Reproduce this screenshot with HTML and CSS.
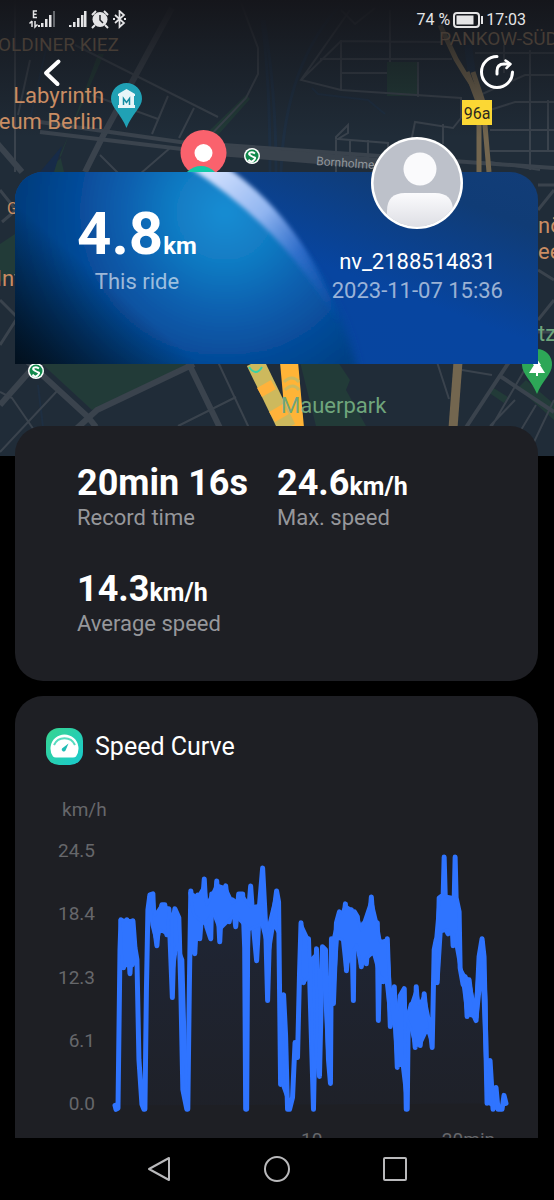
FILE: index.html
```html
<!DOCTYPE html>
<html lang="en">
<head>
<meta charset="utf-8">
<meta name="viewport" content="width=device-width, initial-scale=1">
<title>Ride details</title>
<link rel="stylesheet" href="styles.css">
</head>
<body>
<div class="screen">
  <svg class="map" viewBox="0 0 554 456" preserveAspectRatio="xMidYMin slice" role="img" aria-label="Ride map">
    <defs>
      <linearGradient id="shade" x1="0" y1="0" x2="0" y2="1">
        <stop offset="0" stop-color="#15161b"/>
        <stop offset=".3" stop-color="#15161b" stop-opacity=".6"/>
        <stop offset=".8" stop-color="#15161b" stop-opacity="0"/>
      </linearGradient>
    </defs>
    <rect width="554" height="456" fill="#202c38"/>
    <g fill="#223b38">
      <path d="M387 62h31v34h-31z"/>
      <path d="M44 172l16-13 38-105h6L60 155l4 17z"/>
      <path d="M208 132l38-37 4 4-32 36z"/>
      <path d="M0 244l18-12v40l-18 10z"/>
      <path d="M40 362h152l-100 48z"/>
      <path d="M300 362h38l12 18-4 10 20 36h-50z"/>
      <path d="M488 392l4-5 16 10-4 6zM518 388l8-8 28 24v16z"/>
    </g>
    <path d="M40 172l22-26-8 26z" fill="#172b48"/>
    <g fill="none" stroke="#1e2f42" stroke-width="3">
      <path d="M345 0Q285 60 281 172M262 20Q270 80 270 172M264 20Q276 90 276 172" />
      <path d="M30 120L48 40M312 88l6 6 50 6 17 14" stroke-width="2"/>
      <path d="M468 45l4 30" stroke-width="8"/>
      <path d="M38 385l5 42" stroke-width="2"/>
    </g>
    <g fill="none" stroke="#3a434d">
      <path d="M15 0v172M240 0l18 48v26l-12 24-40 42M75 45L218 117M168 96l-16 38M194 108l-15 30M92 95l66 24M30 60L18 115M100 155l20 20M170 148l-30 26" stroke-width="2"/>
      <path d="M172 8L104 134 85 172M-4 142l26 30" stroke-width="6"/>
      <path d="M40 122l140 20 374 26M40 132l150 18" stroke-width="4"/>
      <path d="M225 151l160 13" stroke-width="11"/>
      <path d="M350 10L301 80l40 10 120 8v20l-8 10-38-6-4 20M341 40v50M301 80l40-39 100 1M320 59h132M340 73h47M390 10v52M418 62v35M341 10l14 14 20-16M336 172v-35l12-12v8l-10 6 50 4v28M350 140v24M368 140v24M443 124v20" stroke-width="2"/>
      <path d="M480 95l45-20h29M490 110l25-8h39M530 50v120M490 130h64M490 151h64M490 162l50 8M548 100v50M475 53h79M504 45v28" stroke-width="2"/>
      <path d="M0 405L38 362M28 362l60 55 8 10M75 430l22-20 97-46M188 362l32 66" stroke-width="6"/>
      <path d="M178 426l58-29M218 362l31 66M0 392l12 6 22 32M58 390L0 452M437 362l12 37M462 370l30 5M528 364l-36 62M515 400l-25 26M554 400l-20 42M536 405l-18 30" stroke-width="2"/>
      <path d="M509 362l-46 70M500 376l54 36" stroke-width="4"/>
      <path d="M0 300l20 20M0 190l16 20-14 12M538 185h16M538 210l16-20M0 345l16-25M538 270l16 10M554 300l-16 20M538 332h16" stroke-width="3"/>
    </g>
    <g fill="none" stroke="#73664f">
      <path d="M440 25l16 34 9 15 14 21" stroke-width="5"/>
      <path d="M467 72l12 32v68M473 72l10 30 6 70" stroke-width="5"/>
      <path d="M458 362l-5 66" stroke-width="9"/>
    </g>
    <g fill="none">
      <path d="M289 362l6 66" stroke="#ffb437" stroke-width="18"/>
      <path d="M255 362l32 66" stroke="#cdb95d" stroke-width="18"/>
      <path d="M264 384l5 9M276 408l6 10" stroke="#ffb23b" stroke-width="16"/>
      <path d="M284 382q8-8 15 0M285 390q8-8 14 0" stroke="#cdb95d" stroke-width="3"/>
      <path d="M249 367q7 10 13 0" stroke="#38d3a7" stroke-width="2"/>
    </g>
    <rect width="554" height="172" fill="url(#shade)"/>
    <g>
      <text class="district" x="119" y="51" text-anchor="end">OLDINER KIEZ</text>
      <text class="district" x="439" y="45">PANKOW-SÜD</text>
      <text class="place" x="104" y="103" text-anchor="end">Labyrinth</text>
      <text class="place" x="103" y="129" text-anchor="end">eum Berlin</text>
      <text class="street" x="316" y="165" transform="rotate(4 316 165)">Bornholme</text>
      <text class="place small" x="7" y="214">G</text>
      <text class="place" x="-4" y="286">Int</text>
      <text class="place" x="538" y="233">nö</text>
      <text class="place" x="538" y="259">ee</text>
      <text class="park" x="538" y="341">tz</text>
      <text class="park" x="281" y="413">Mauerpark</text>
    </g>
    <path d="M126.500 83a15.500 15.500 0 0 1 15.500 16c0 8-10 15-15.500 29-5.500-14-15.500-21-15.500-29a15.500 15.500 0 0 1 15.500-16z" fill="#20a1b5"/>
    <path d="M118 96v-2l8.500-5 8.500 5v2zM119 96h15v9h1v3h-17v-3h1z" fill="#e8f6f8"/>
    <path d="M123.500 105v-6.500l3 4 3-4v6.500" fill="none" stroke="#168ea3" stroke-width="1.500"/>
    <rect x="462" y="100" width="30" height="25" fill="#fbd734"/>
    <text class="shield" x="477" y="119" text-anchor="middle">96a</text>
    <circle cx="203.500" cy="153" r="23" fill="#fa626d"/>
    <circle cx="203.500" cy="153" r="9" fill="#fff"/>
    <circle cx="201" cy="185" r="19" fill="#12c9a7"/>
    <g id="sbahn">
      <circle cx="252" cy="156" r="8" fill="#fff"/>
      <circle cx="252" cy="156" r="6.500" fill="#128a4d"/>
      <path d="M255 153.500q-3-2-5-.8t.5 2.800 4 2-1 3-5-.8" fill="none" stroke="#fff" stroke-width="2"/>
    </g>
    <use href="#sbahn" x="-216" y="215"/>
    <path d="M537 349a15 15 0 0 1 15 16c0 9-10 16-15 29-5-13-15-20-15-29a15 15 0 0 1 15-16z" fill="#2da757"/>
    <path d="M537 359l4 6h-1l5 8h-7v3h-2v-3h-7l5-8h-1z" fill="#fff"/>
  </svg>

  <header class="status">
    <div class="status-group">
      <svg width="98" height="20" viewBox="0 0 98 20" role="img" aria-label="Mobile signal, alarm, Bluetooth">
        <path d="M9 1H5.500v6.500H9M5.500 4.200h3M4 11v6M1.500 13.500l2.500-2.500M7 11v6l2.500-2.500" fill="none" stroke="#e4e4e6" stroke-width="1.500"/>
        <path d="M10 15h2v2h-2zM13 13h2.500v4H13zM17 9h2.500v8H17zM21 5h2.500v12H21zM41 15h2.500v2H41zM45 12h2.500v5H45zM49 8h2.500v9H49zM53 5h2.500v12H53zM56 1h2.500v16H56z" fill="#e4e4e6"/>
        <path d="M25 1h2v16h-2z" fill="#66696e"/>
        <circle cx="72" cy="9.500" r="7.500" fill="#e4e4e6"/>
        <path d="M64 5l4-4M80 5l-4-4M67 15l-3 3M77 15l3 3" stroke="#e4e4e6" stroke-width="2"/>
        <path d="M72 5v5l3 3" fill="none" stroke="#202228" stroke-width="1.500"/>
        <path d="M87 5l9 8-4.500 4V1L96 5l-9 8" fill="none" stroke="#e4e4e6" stroke-width="1.700"/>
        <path d="M85 9h2M96 9h2" stroke="#e4e4e6" stroke-width="2"/>
      </svg>
    </div>
    <div class="status-group">
      <span>74 %</span>
      <svg width="32" height="18" viewBox="0 0 32 18" role="img" aria-label="Battery">
        <rect x="2" y="2" width="25" height="14" rx="3" fill="none" stroke="#e4e4e6" stroke-width="2"/>
        <path d="M4.500 4.500h17v9h-17z" fill="#e4e4e6"/>
        <path d="M30 5v8" stroke="#e4e4e6" stroke-width="2"/>
      </svg>
      <span>17:03</span>
    </div>
  </header>

  <div class="toolbar">
    <button class="icon-button" type="button" aria-label="Back">
      <svg width="36" height="36" viewBox="0 0 36 36"><path d="M24.500 7.500L12 19l11.500 11" fill="none" stroke="#fff" stroke-width="4" stroke-linecap="round" stroke-linejoin="round"/></svg>
    </button>
    <button class="icon-button" type="button" aria-label="Share">
      <svg width="36" height="36" viewBox="0 0 36 36" fill="none" stroke="#fff" stroke-width="3" stroke-linecap="round" stroke-linejoin="round"><path d="M18 2.500a15.500 15.500 0 1 0 15.500 15.500"/><path d="M18 20v-3q0-7 7-7h5"/><path d="M26.500 6.500l5 3.500-4 4" stroke-width="2.500"/></svg>
    </button>
  </div>

  <main class="content">
    <section class="ride">
      <svg class="ride-art" viewBox="0 0 523 192" preserveAspectRatio="none" aria-hidden="true">
        <defs>
          <linearGradient id="space" x1="0" y1="1" x2="1" y2="0">
            <stop offset="0" stop-color="#07459f"/><stop offset=".55" stop-color="#0745a0"/><stop offset=".85" stop-color="#103c76"/><stop offset="1" stop-color="#123d78"/>
          </linearGradient>
          <radialGradient id="planet" gradientUnits="userSpaceOnUse" cx="210" cy="40" r="290">
            <stop offset="0" stop-color="#188dd3"/><stop offset=".18" stop-color="#117bc3"/><stop offset=".35" stop-color="#0a5fae"/><stop offset=".52" stop-color="#064a98"/><stop offset=".75" stop-color="#043a78"/><stop offset="1" stop-color="#022346"/>
          </radialGradient>
          <linearGradient id="rim" gradientUnits="userSpaceOnUse" x1="190" y1="0" x2="325" y2="150">
            <stop offset="0" stop-color="#d5e3ff"/><stop offset=".35" stop-color="#8fb4f0"/><stop offset=".6" stop-color="#3a74d2" stop-opacity=".8"/><stop offset="1" stop-color="#0b4db0" stop-opacity="0"/>
          </linearGradient>
          <linearGradient id="night" gradientUnits="userSpaceOnUse" x1="0" y1="192" x2="80" y2="100">
            <stop offset="0" stop-color="#02101d"/><stop offset="1" stop-color="#02101d" stop-opacity="0"/>
          </linearGradient>
          <filter id="edge" x="-10%" y="-10%" width="120%" height="120%"><feGaussianBlur stdDeviation="4"/></filter>
          <filter id="glow" x="-10%" y="-10%" width="120%" height="120%"><feGaussianBlur stdDeviation="2"/></filter>
        </defs>
        <rect width="523" height="192" fill="url(#space)"/>
        <path d="M-20-20H160Q322 70 345 212H-20z" fill="url(#planet)" filter="url(#edge)"/>
        <path d="M172-6h38q92 62 130 198Q292 70 172-6z" fill="url(#rim)" filter="url(#glow)"/>
        <rect width="200" height="192" fill="url(#night)"/>
      </svg>
      <div class="distance">
        <p class="big">4.8<span class="unit">km</span></p>
        <p class="label">This ride</p>
      </div>
      <div class="rider">
        <svg class="avatar" width="92" height="92" viewBox="0 0 92 92" role="img" aria-label="Rider picture">
          <defs>
            <clipPath id="face"><circle cx="46" cy="46" r="43.500"/></clipPath>
            <linearGradient id="body" x1="0" y1="0" x2="0" y2="1"><stop offset="0" stop-color="#fbfbfd"/><stop offset="1" stop-color="#dcdde3"/></linearGradient>
          </defs>
          <circle cx="46" cy="46" r="46" fill="#fff"/>
          <g clip-path="url(#face)">
            <path d="M0 0h92v92H0z" fill="#bdc1ca"/>
            <circle cx="49" cy="32" r="16.500" fill="#fafafc"/>
            <path d="M16 92V74q0-18 18-18h30q18 0 18 18v18z" fill="url(#body)"/>
          </g>
        </svg>
        <p class="name">nv_2188514831</p>
        <p class="label">2023-11-07 15:36</p>
      </div>
    </section>

    <section class="card stats">
      <div><p class="value">20min 16s</p><p class="label">Record time</p></div>
      <div><p class="value">24.6<span class="unit">km/h</span></p><p class="label">Max. speed</p></div>
      <div><p class="value">14.3<span class="unit">km/h</span></p><p class="label">Average speed</p></div>
    </section>

    <section class="card speed">
      <h2 class="speed-title">
        <svg width="38" height="38" viewBox="0 0 38 38" aria-hidden="true">
          <defs><linearGradient id="mint" x1="0" y1="0" x2="1" y2="1"><stop offset="0" stop-color="#38d58f"/><stop offset="1" stop-color="#18c9cf"/></linearGradient></defs>
          <rect x="1" y="0" width="37" height="37" rx="13" fill="url(#mint)"/>
          <path d="M8 28.500a14 14 0 1 1 23 0q-1 1-3 1H11q-2 0-3-1z" fill="#fff"/>
          <path d="M9 17a11.500 11.500 0 0 1 21 0" fill="none" stroke="#58dcc0" stroke-width="2"/>
          <path d="M23.500 15.500l-3 7a2 2 0 0 1-3.500-2z" fill="#1fbcb5"/>
        </svg>
        Speed Curve
      </h2>
      <p class="axis-unit">km/h</p>
      <div class="chart">
        <div class="y-axis"><span>24.5</span><span>18.4</span><span>12.3</span><span>6.1</span><span>0.0</span></div>
        <svg class="plot" viewBox="112 850 398 264" role="img" aria-label="Speed over time">
          <defs><linearGradient id="fill" x1="0" y1="0" x2="0" y2="1"><stop offset="0" stop-color="#2c72ff" stop-opacity=".09"/><stop offset="1" stop-color="#2c72ff" stop-opacity=".02"/></linearGradient></defs>
          <path fill="url(#fill)" stroke="#2f74ff" stroke-width="5" stroke-linejoin="round" stroke-linecap="round" d="M115 1106L116 1110 118 1109 120 950 121 920 123.500 968 127 920 130 974 133 921 135 948 137 960 139 1060 142 1105 144 1110 145 1110 146.500 990 148 910 150 895 153 894 154 922 157 946 159 920 162 905 165 905 167 935 169 909 172.500 998 175 909 179 918 181 990 183 1090 187 1110 188 1110 189.500 990 191 891 193 908 195 954 198 895 200 939 204.500 879 207 927 211 939 212 894 215 910 217 881 220 942 222 900 226 886 229.500 922 233 900 236 927 239 894 243 894 245 948 246 1110 247 1110 248 948 249 911 251 886 254 929 257 961 260 904 263 868 266 925 268 1001 270 932 275 907 277 891 279 902 281 1085 284 995 286 1035 288 1110 290 1110 293 1098 295.500 1043 298 1058 300 973 301.500 923 304 983 309 939 314 1110 317 949 320 1077 323 947 326 950 329 1060 331 1084 332 939 334 1004 337 923 340 912 342 938 346 904 347 971 352 910 354 1001 355 912 358 917 362 967 364 924 367 964 372 897 376 953 378 923 379 1021 381 942 384 982 388 939 391 1027 395 987 398 1068 401 996 405 989 407 1110 408 1110 409 1018 412 1005 416 1048 417 987 421 1046 425 994 428 1030 430 1020 433 1048 435 950 437 940 438 983 440 898 444 895 445 857 447 930 449 934 452 906 454 946 456 857 457 898 460 912 461 968 464 985 466 977 468 1017 470 980 474 1014 477 1021 480 957 483 939 485 957 488 1104 491 1061 494 1110 497 1088 499 1110 503 1110 505 1096 507 1104"/>
          <path fill="#2f74ff" stroke="#2f74ff" stroke-width="3" stroke-linejoin="round" d="M120 920L133 921 136 960 133 966 122 966zM149 897L153 896 155 915 162 905 169 909 168 935 160 930 157 944 152 925zM172 915L175 909 179 918 182 980 183 1085 187 1107 183 960 177 945 172 980zM190 893L198 897 205 885 207 905 217 885 226 888 233 903 243 896 251 907 263 905 268 930 277 893 279 905 280 935 274 925 270 950 266 940 262 924 249 930 235 915 228 922 220 930 213 912 206 925 194 915zM281 1000L284 1000 286 1035 288 1100 282 1083zM300 975L302 925 309 940 311 975 304 983zM311 960L316 955 318 1020 314 1100zM323 950L326 950 331 1080 328 1050zM333 942L338 922 346 906 352 910 358 917 362 930 372 900 378 925 381 942 388 940 391 990 395 990 398 1010 405 992 407 1100 403 1066 398 1066 395 1025 391 1020 387 983 380 975 374 953 366 960 361 965 357 945 350 960 346 968 343 940 338 938 334 1000zM407 1018L412 1005 417 990 420 1005 425 996 430 1020 433 1044 428 1030 421 1045 416 1046 412 1030zM436 945L440 900 446 896 457 898 460 912 461 968 455 935 448 930 442 932 439 980zM462 970L466 977 470 980 476 1010 480 960 484 942 487 1000 488 1060 491 1065 495 1107 488 1103 483 970 478 1018 468 1015z"/>
        </svg>
      </div>
      <div class="x-axis"><span>10</span><span>20min</span></div>
    </section>
  </main>

  <nav class="system-nav" aria-label="System">
    <button class="icon-button" type="button" aria-label="Back"><svg width="28" height="28" viewBox="0 0 28 28"><path d="M24 3v22L4 14z"/></svg></button>
    <button class="icon-button" type="button" aria-label="Home"><svg width="28" height="28" viewBox="0 0 28 28"><circle cx="14" cy="14" r="12"/></svg></button>
    <button class="icon-button" type="button" aria-label="Recent apps"><svg width="28" height="28" viewBox="0 0 28 28"><rect x="3" y="3" width="22" height="22" rx="1"/></svg></button>
  </nav>
</div>
</body>
</html>
```
FILE: styles.css
```css
* { box-sizing: border-box; }

body {
  margin: 0;
  background: #000;
  color: #fff;
  font-family: Roboto, "Liberation Sans", sans-serif;
  font-size: 22px;
  font-weight: 400;
  line-height: 28px;
}

p, h2 { margin: 0; }

.screen {
  position: relative;
  display: flex;
  flex-direction: column;
  height: 100vh;
  overflow: hidden;
}

.map {
  position: absolute;
  top: 0;
  left: 0;
  width: 100%;
  height: 456px;
}

.place { font-size: 22px; fill: #c98d63; }
.small { font-size: 16px; }
.park { font-size: 22px; fill: #6fa57c; }
.street { font-size: 12px; fill: #8f959b; }
.district { font-size: 19px; fill: #453c35; }
.shield { font-size: 16px; fill: #2c2a20; }

.status, .toolbar, .content { position: relative; }

.status {
  display: flex;
  justify-content: space-between;
  align-items: center;
  height: 40px;
  padding: 0 28px;
  font-size: 16px;
  line-height: 20px;
  color: #e4e4e6;
}

.status-group { display: flex; align-items: center; gap: 2px; }

.toolbar {
  display: flex;
  justify-content: space-between;
  height: 132px;
  padding: 14px 39px 0 34px;
}

.icon-button {
  display: flex;
  align-items: center;
  justify-content: center;
  height: 36px;
  padding: 0;
  border: 0;
  background: none;
}

.content {
  flex: 1;
  min-height: 0;
  overflow: hidden auto;
  scrollbar-width: none;
  margin-top: -40px;
  padding: 40px 16px 0 15px;
}

.ride {
  position: relative;
  display: flex;
  justify-content: space-between;
  height: 192px;
  padding: 0 35px 0 62px;
}

.ride-art {
  position: absolute;
  inset: 0;
  width: 100%;
  height: 100%;
  border-radius: 28px 28px 0 0;
}

.distance, .rider {
  position: relative;
  display: flex;
  flex-direction: column;
  align-items: center;
}

.distance { padding-top: 28px; }
.rider { margin-top: -35px; }

.big { font-size: 60px; font-weight: 700; line-height: 68px; }
.unit { line-height: 1; }
.big .unit { font-size: 24px; }
.name { margin-top: 18px; line-height: 30px; }
.ride .label { color: rgba(255, 255, 255, .6); }
.avatar { display: block; }

.card { background: #1e1f24; border-radius: 28px; }

.stats {
  display: grid;
  grid-template-columns: 170px auto;
  justify-content: start;
  gap: 36px 30px;
  margin-top: 62px;
  padding: 36px 62px 43px;
}

.value { font-size: 36px; font-weight: 700; line-height: 42px; white-space: nowrap; }
.value .unit { font-size: 25px; }
.card .label { color: #96979b; }

.speed {
  margin-top: 15px;
  padding: 32px 29px 30px 30px;
}

.speed-title {
  display: flex;
  align-items: center;
  gap: 12px;
  font-size: 25px;
  font-weight: 400;
  line-height: 38px;
}

.axis-unit {
  margin: 30px 0 0 17px;
  font-size: 19px;
  color: #66676b;
}

.chart { display: flex; gap: 17px; margin-top: 17px; }

.y-axis {
  display: flex;
  flex-direction: column;
  justify-content: space-between;
  align-items: flex-end;
  width: 50px;
  margin-bottom: -1px;
  font-size: 19px;
  line-height: 20px;
  color: #66676b;
}

.plot { flex: 1; min-width: 0; margin-top: 9px; }

.x-axis {
  display: flex;
  justify-content: space-between;
  padding: 17px 14px 0 256px;
  font-size: 19px;
  line-height: 20px;
  color: #66676b;
}

.system-nav {
  position: relative;
  display: flex;
  justify-content: center;
  gap: 90px;
  height: 62px;
  padding-top: 13px;
  background: #000;
}

.system-nav svg { fill: none; stroke: #b9b9bb; stroke-width: 2; stroke-linejoin: round; }
```
